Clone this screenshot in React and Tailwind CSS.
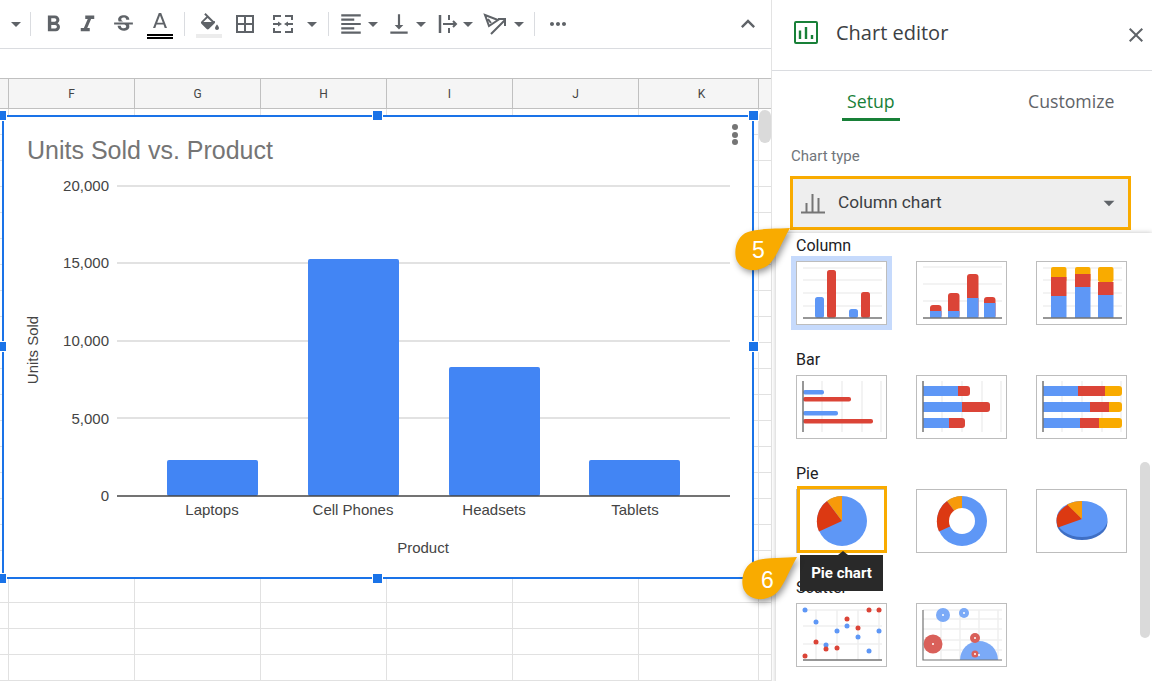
import {
  MdFormatBold,
  MdFormatItalic,
  MdStrikethroughS,
  MdBorderAll,
  MdFormatAlignLeft,
  MdVerticalAlignBottom,
  MdMoreHoriz,
  MdExpandLess,
  MdArrowDropDown,
  MdClose,
} from "react-icons/md";

const BLUE = "#5e97f6";
const RED = "#db4437";
const YELLOW = "#f9ab00";
const LIGHT = "#efefef";

const Arrow = ({ className }) => (
  <MdArrowDropDown size={24} className={`shrink-0 text-[#5f6368] ${className}`} />
);

const Sep = ({ className }) => <div className={`w-px h-6 bg-[#dadce0] shrink-0 ${className}`} />;

const Toolbar = () => (
  <div className="h-[49px] border-b border-[#dadce0] flex items-center shrink-0 text-[#5f6368]">
    <Arrow className="ml-[4px]" />
    <Sep className="ml-[2px]" />
    <MdFormatBold size={27} className="ml-[9px] shrink-0" />
    <MdFormatItalic size={27} className="ml-[7px] shrink-0" />
    <MdStrikethroughS size={25} className="ml-[10px] shrink-0" />
    <div className="ml-[11px] w-[26px] flex flex-col items-center self-start mt-[11px] shrink-0">
      <svg width="24" height="24" viewBox="0 0 24 24" fill="#5f6368">
        <path d="M10.8 2 5 17h2.3l1.2-3.4h7l1.2 3.4H19L13.2 2h-2.4zm-1.6 9.7L12 4.4l2.8 7.3H9.2z" />
      </svg>
      <div className="w-[26px] h-[5px] -mt-px border-y-2 border-black" />
    </div>
    <Sep className="ml-[11px]" />
    <div className="ml-[11px] w-[26px] flex flex-col items-center self-start mt-[12px] shrink-0">
      <svg width="24" height="22" viewBox="0 0 24 22" fill="#5f6368">
        <path d="M16.6 8.9 8.6 1 7.2 2.4l2.2 2.2-5 5c-.6.6-.6 1.5 0 2.1l5.3 5.3c.6.6 1.5.6 2.1 0l5.8-5.8c.6-.6.6-1.6 0-2.3zM6.4 10 10.6 6l4.2 4H6.4zM20 12.500s-2 2.200-2 3.500c0 1.100.9 2 2 2s2-.9 2-2c0-1.300-2-3.500-2-3.500z" />
      </svg>
      <div className="w-[26px] h-[4px] bg-[#ececec]" />
    </div>
    <MdBorderAll size={24} className="ml-[11px] shrink-0" />
    <svg width="24" height="24" viewBox="0 0 24 24" fill="none" stroke="#5f6368" strokeWidth="2" className="ml-[14px] shrink-0">
      <path d="M3 8V4h7M14 4h7v4M3 16v4h7M14 20h7v-4" />
      <path d="M2 12h6M22 12h-6" />
      <path d="M7 9.500v5L11 12zM17 9.500v5L13 12z" fill="#5f6368" stroke="none" />
    </svg>
    <Arrow className="ml-[5px]" />
    <Sep className="ml-[4px]" />
    <MdFormatAlignLeft size={26} className="ml-[9px] shrink-0" />
    <Arrow className="-ml-[3px]" />
    <MdVerticalAlignBottom size={26} className="ml-[1px] shrink-0" />
    <Arrow className="-ml-[3px]" />
    <svg width="24" height="24" viewBox="0 0 24 24" fill="none" stroke="#5f6368" strokeWidth="2" className="ml-[3px] shrink-0">
      <path d="M4 3v18" strokeWidth="2.500" />
      <path d="M13 3v5M13 16v5M7 12h13M17 9l3 3-3 3" />
    </svg>
    <Arrow className="-ml-[4px]" />
    <svg width="24" height="24" viewBox="0 0 24 24" fill="none" stroke="#5f6368" strokeWidth="2" className="ml-[3px] shrink-0">
      <path d="M2 3l13 5-9 6zM5 7l3 4" />
      <path d="M8 22 22 8M15 7h7v7" />
    </svg>
    <Arrow className="ml-0" />
    <Sep className="ml-[3px]" />
    <MdMoreHoriz size={24} className="ml-[11px] shrink-0" />
    <MdExpandLess size={28} className="ml-auto mr-[9px] shrink-0" />
  </div>
);

const ColumnHeader = () => (
  <div className="h-[31px] flex bg-[#f5f5f5] border-y border-[#c0c0c0] shrink-0 text-xs text-[#444] font-['Roboto',sans-serif]">
    <div className="w-[9px] border-r border-[#c0c0c0]" />
    {["F", "G", "H", "I", "J"].map((c) => (
      <div key={c} className="w-[126px] border-r border-[#c0c0c0] flex items-center justify-center">
        {c}
      </div>
    ))}
    <div className="w-[120px] border-r border-[#c0c0c0] flex items-center justify-center pl-[6px]">K</div>
  </div>
);

const GridRows = () => (
  <div>
    {Array.from({ length: 23 }).map((_, i) => (
      <div key={i} className="h-[26px] flex border-b border-[#e1e1e1]">
        <div className="w-[9px] border-r border-[#e1e1e1]" />
        {[0, 1, 2, 3, 4].map((c) => (
          <div key={c} className="w-[126px] border-r border-[#e1e1e1]" />
        ))}
        <div className="w-[120px] border-r border-[#e1e1e1]" />
      </div>
    ))}
  </div>
);

const Handle = ({ className }) => (
  <div className={`absolute w-[11px] h-[11px] bg-[#1a73e8] border border-white ${className}`} />
);

const UnitsChart = () => (
  <div className="absolute left-[2px] top-[115px] w-[752px] h-[464px] bg-white border-[2px] border-[#1a73e8]">
    <svg width="748" height="460" viewBox="4 117 748 460" className="block font-['Liberation_Sans',sans-serif]">
      <text x="27" y="159" fontSize="25" fill="#757575">Units Sold vs. Product</text>
      {[186, 263, 341, 418].map((y) => (
        <line key={y} x1="117" x2="730" y1={y} y2={y} stroke="#d9d9d9" strokeWidth="1.500" />
      ))}
      {[
        ["20,000", 191],
        ["15,000", 268],
        ["10,000", 346],
        ["5,000", 424],
        ["0", 501],
      ].map(([t, y]) => (
        <text key={t} x="109" y={y} fontSize="15" fill="#444" textAnchor="end">{t}</text>
      ))}
      {[
        [167, 460],
        [308, 259],
        [449, 367],
        [589, 460],
      ].map(([x, y]) => (
        <rect key={x} x={x} y={y} width="91" height={496 - y} rx="2" fill="#4285f4" />
      ))}
      <line x1="117" x2="730" y1="496" y2="496" stroke="#444" strokeWidth="1.500" />
      {[
        ["Laptops", 212],
        ["Cell Phones", 353],
        ["Headsets", 494],
        ["Tablets", 635],
      ].map(([t, x]) => (
        <text key={t} x={x} y="515" fontSize="15" fill="#444" textAnchor="middle">{t}</text>
      ))}
      <text x="423" y="553" fontSize="15" fill="#444" textAnchor="middle">Product</text>
      <text transform="translate(38 350) rotate(-90)" fontSize="15" fill="#444" textAnchor="middle">Units Sold</text>
      <circle cx="735" cy="127" r="3" fill="#757575" />
      <circle cx="735" cy="135" r="3" fill="#757575" />
      <circle cx="735" cy="142" r="3" fill="#757575" />
    </svg>
  </div>
);

const Thumb = ({ children, className = "" }) => (
  <div className={`w-[91px] h-[64px] border border-[#bdbdbd] bg-white shrink-0 ${className}`}>
    <svg width="89" height="62" viewBox="1 1 89 62" className="block">{children}</svg>
  </div>
);

const HLines = ({ ys, x2 = 86 }) =>
  ys.map((y) => <line key={y} x1="7" x2={x2} y1={y} y2={y} stroke={LIGHT} strokeWidth="1.500" />);

const VLines = ({ xs, y1 = 6, y2 = 57 }) =>
  xs.map((x) => <line key={x} x1={x} x2={x} y1={y1} y2={y2} stroke={LIGHT} strokeWidth="1.500" />);

const ColumnThumb1 = () => (
  <Thumb className="ring-[5px] ring-[#c6dafc]">
    <HLines ys={[7, 19, 32, 45]} />
    <rect x="19" y="36" width="9" height="21" rx="2.500" fill={BLUE} />
    <rect x="31" y="9" width="9" height="48" rx="2.500" fill={RED} />
    <rect x="53" y="48" width="9" height="9" rx="2.500" fill={BLUE} />
    <rect x="65" y="31" width="9" height="26" rx="2.500" fill={RED} />
    <line x1="7" x2="86" y1="57" y2="57" stroke="#757575" strokeWidth="1.500" />
  </Thumb>
);

const ColumnThumb2 = () => (
  <Thumb>
    <HLines ys={[6, 23, 40]} />
    {[
      [14, 44, 50],
      [32, 32, 50],
      [51, 13, 37],
      [68, 36, 42],
    ].map(([x, r, b]) => (
      <g key={x}>
        <rect x={x} y={r} width="11.500" height={57 - r} rx="3" fill={RED} />
        <rect x={x} y={b} width="11.500" height={57 - b} fill={BLUE} />
      </g>
    ))}
    <line x1="7" x2="86" y1="57" y2="57" stroke="#757575" strokeWidth="1.500" />
  </Thumb>
);

const ColumnThumb3 = () => (
  <Thumb>
    <HLines ys={[7, 19, 32, 45]} />
    {[
      [15, 16, 35],
      [39, 13, 26],
      [62, 21, 34],
    ].map(([x, r, b]) => (
      <g key={x}>
        <rect x={x} y="6" width="15.500" height="15" rx="2" fill={YELLOW} />
        <rect x={x} y={r} width="15.500" height={b - r} fill={RED} />
        <rect x={x} y={b} width="15.500" height={57 - b} fill={BLUE} />
      </g>
    ))}
    <line x1="7" x2="86" y1="57" y2="57" stroke="#757575" strokeWidth="1.500" />
  </Thumb>
);

const BarThumb1 = () => (
  <Thumb>
    <VLines xs={[26, 46, 66, 85]} />
    <rect x="7" y="15" width="21" height="4.500" rx="2" fill={BLUE} />
    <rect x="7" y="22" width="48" height="4.500" rx="2" fill={RED} />
    <rect x="7" y="36" width="35" height="4.500" rx="2" fill={BLUE} />
    <rect x="7" y="44" width="70" height="4.500" rx="2" fill={RED} />
    <line x1="7" x2="7" y1="6" y2="57" stroke="#757575" strokeWidth="1.500" />
  </Thumb>
);

const BarThumb2 = () => (
  <Thumb>
    <VLines xs={[26, 46, 66, 85]} />
    {[
      [11, 42, 54],
      [27, 46, 74],
      [43, 33, 49],
    ].map(([y, b, r]) => (
      <g key={y}>
        <rect x="20" y={y} width={r - 20} height="10" rx="3" fill={RED} />
        <rect x="7" y={y} width={b - 7} height="10" fill={BLUE} />
      </g>
    ))}
    <line x1="7" x2="7" y1="6" y2="57" stroke="#757575" strokeWidth="1.500" />
  </Thumb>
);

const BarThumb3 = () => (
  <Thumb>
    <VLines xs={[26, 46, 66, 85]} />
    {[
      [11, 42, 69],
      [27, 54, 73],
      [43, 44, 63],
    ].map(([y, b, r]) => (
      <g key={y}>
        <rect x="50" y={y} width="36" height="10" rx="3" fill={YELLOW} />
        <rect x={b} y={y} width={r - b} height="10" fill={RED} />
        <rect x="7" y={y} width={b - 7} height="10" fill={BLUE} />
      </g>
    ))}
    <line x1="7" x2="7" y1="6" y2="57" stroke="#757575" strokeWidth="1.500" />
  </Thumb>
);

const PieSlices = () => (
  <>
    <circle cx="46" cy="32" r="25" fill={BLUE} />
    <path d="M46 32 23 42.600A25.500 25.500 0 0 1 31 12Z" fill="#dc3912" />
    <path d="M46 32 31 12A25 25 0 0 1 46 7Z" fill="#f79a0a" />
  </>
);

const PieThumb1 = () => (
  <Thumb>
    <PieSlices />
  </Thumb>
);

const PieThumb2 = () => (
  <Thumb>
    <PieSlices />
    <circle cx="46" cy="32" r="13" fill="#fff" />
  </Thumb>
);

const PieThumb3 = () => (
  <Thumb>
    <ellipse cx="46" cy="33" rx="25.500" ry="18" fill="#3f6fc4" />
    <ellipse cx="46" cy="30" rx="25.500" ry="18" fill={BLUE} />
    <path d="M46 30 22 38.500C19 30 20 23 32 15.500Z" fill="#dc3912" />
    <path d="M46 30 31 15.500C36 13 41 12 46 12Z" fill="#f79a0a" />
  </Thumb>
);

const ScatterThumb1 = () => (
  <Thumb>
    <VLines xs={[20, 41, 62, 83]} y1={7} />
    <HLines ys={[7, 23, 41]} />
    {[
      [9, 7],
      [20, 19],
      [41, 28],
      [51, 23],
      [62, 34],
      [30, 42],
      [73, 48],
      [83, 28],
    ].map(([x, y]) => (
      <circle key={`b${x}${y}`} cx={x} cy={y} r="2.500" fill={BLUE} />
    ))}
    {[
      [73, 7],
      [83, 7],
      [51, 16],
      [62, 25],
      [20, 39],
      [30, 46],
      [41, 45],
      [9, 53],
    ].map(([x, y]) => (
      <circle key={`r${x}${y}`} cx={x} cy={y} r="2.500" fill={RED} />
    ))}
    <line x1="7" x2="86" y1="57" y2="57" stroke="#757575" strokeWidth="1.500" />
  </Thumb>
);

const ScatterThumb2 = () => (
  <Thumb>
    <VLines xs={[25, 44, 63, 82]} y1={7} />
    <HLines ys={[7, 16, 26, 37, 47]} />
    <path d="M44 57A19 19 0 0 1 82 57Z" fill="#7baaf7" />
    <circle cx="27" cy="12" r="7" fill="#7baaf7" />
    <circle cx="48" cy="10" r="5" fill="#7baaf7" />
    <circle cx="17" cy="41" r="9.500" fill="#d9605a" />
    <circle cx="59" cy="35" r="5" fill="#d9605a" />
    <circle cx="59" cy="51" r="3.500" fill="#d9605a" />
    {[
      [27, 12],
      [48, 10],
      [17, 41],
      [59, 35],
      [59, 51],
      [63, 52],
    ].map(([x, y]) => (
      <circle key={`${x}${y}`} cx={x} cy={y} r="1" fill="#fff" />
    ))}
    <path d="M7 7v50h79" fill="none" stroke="#757575" strokeWidth="1.200" />
  </Thumb>
);

const Section = ({ title, children }) => (
  <div className="h-[114px] pl-[20px]">
    <div className="h-5 text-base leading-5 text-[#202124]">{title}</div>
    <div className="mt-[5px] flex gap-[29px]">{children}</div>
  </div>
);

const ChartEditor = () => (
  <div className="w-[381px] h-full flex flex-col shrink-0 border-l border-[#e3e3e3] relative font-['Roboto',sans-serif]">
    <div className="h-[71px] flex items-center border-b border-[#dadce0] shrink-0">
      <svg width="26" height="26" viewBox="0 0 26 26" fill="none" className="ml-[21px] -mt-[4px]">
        <rect x="2" y="2" width="22" height="21" rx="1" stroke="#188038" strokeWidth="2" />
        <path d="M8 10.500v8.500M14 7v12M20 15v4" stroke="#188038" strokeWidth="2.400" transform="translate(-1 0)" />
      </svg>
      <div className="ml-[17px] -mt-[4px] text-[20px] font-['Open_Sans',sans-serif] text-[#3c4043]">Chart editor</div>
      <MdClose size={24} className="ml-auto mr-[4px] text-[#5f6368]" />
    </div>
    <div className="h-[50px] relative shrink-0 text-[17.700px] font-medium font-['Open_Sans',sans-serif]">
      <div className="absolute left-[75px] top-[18px] text-[#188038] leading-6">Setup</div>
      <div className="absolute left-[70px] top-[47px] w-[58px] h-[3px] bg-[#188038]" />
      <div className="absolute left-[256px] top-[18px] text-[#5f6368] leading-6">Customize</div>
    </div>
    <div className="ml-[19px] mt-[25px] text-[15px] leading-5 text-[#70757a] shrink-0">Chart type</div>
    <div className="ml-[18px] mt-[10px] w-[341px] h-[54px] border-[3px] border-[#f9ab00] bg-[#eeeeee] flex items-center shrink-0">
      <svg width="24" height="22" viewBox="0 0 24 22" className="ml-[8px] shrink-0" fill="none" stroke="#757575" strokeWidth="2">
        <path d="M0 20.500h24M5.500 20V11M11.500 20V2M17.500 20V6" />
      </svg>
      <div className="ml-[13px] text-[17.300px] text-[#3c4043]">Column chart</div>
      <MdArrowDropDown size={26} className="ml-auto mr-[6px] text-[#5f6368]" />
    </div>
    <div className="ml-[4px] mt-[3px] flex-1 bg-white pt-[3px] shadow-[0_0_5px_rgba(0,0,0,0.25)]">
      <Section title="Column">
        <ColumnThumb1 />
        <ColumnThumb2 />
        <ColumnThumb3 />
      </Section>
      <Section title="Bar">
        <BarThumb1 />
        <BarThumb2 />
        <BarThumb3 />
      </Section>
      <Section title="Pie">
        <PieThumb1 />
        <PieThumb2 />
        <PieThumb3 />
      </Section>
      <Section title="Scatter">
        <ScatterThumb1 />
        <ScatterThumb2 />
      </Section>
    </div>
    <div className="absolute left-[368px] top-[462px] w-[10px] h-[176px] rounded-full bg-[#dadada]" />
  </div>
);

const Callout = ({ n, className, textClass }) => (
  <div className={`absolute w-[60px] h-[50px] ${className}`}>
    <svg width="60" height="50" viewBox="0 0 60 50" className="drop-shadow-[2px_3px_3px_rgba(0,0,0,0.4)]">
      <path d="M56 2C47 17 42 34 33 40 22 47 8 45 3 35-1 26 2 10 14 6 26 2 44 3 56 2Z" fill="#f9ab00" />
    </svg>
    <div className={`absolute text-white text-[23px] leading-none font-['Liberation_Sans',sans-serif] ${textClass}`}>{n}</div>
  </div>
);

const App = () => {
  return (
    <div className="relative w-[1152px] h-[681px] overflow-hidden flex bg-white font-['Roboto',sans-serif]">
      <div className="w-[771px] h-full flex flex-col shrink-0 overflow-hidden">
        <Toolbar />
        <div className="h-[29px] shrink-0" />
        <ColumnHeader />
        <GridRows />
      </div>
      <ChartEditor />

      {/* things sitting on top of the sheet */}
      <UnitsChart />
      <Handle className="-left-[4px] top-[110px]" />
      <Handle className="left-[372px] top-[110px]" />
      <Handle className="left-[748px] top-[110px]" />
      <Handle className="-left-[4px] top-[341px]" />
      <Handle className="left-[748px] top-[341px]" />
      <Handle className="-left-[4px] top-[573px]" />
      <Handle className="left-[372px] top-[573px]" />
      <Handle className="left-[748px] top-[573px]" />
      <div className="absolute left-[759px] top-[110px] w-[12px] h-[33px] rounded-full bg-[#dadada]" />

      <div className="absolute left-[797px] top-[486px] w-[90px] h-[67px] border-[3px] border-[#f9ab00]" />
      <div className="absolute left-[838px] top-[551px] w-0 h-0 border-x-[5px] border-x-transparent border-b-[4px] border-b-[#292929]" />
      <div className="absolute left-[800px] top-[555px] w-[83px] h-[36px] bg-[#292929] text-white text-[15px] font-bold flex items-center justify-center">
        Pie chart
      </div>

      <Callout n="5" className="left-[734px] top-[226px]" textClass="left-[18px] top-[13px]" />
      <Callout n="6" className="left-[741px] top-[555px]" textClass="left-[20px] top-[14px]" />
    </div>
  );
};

export default App;
